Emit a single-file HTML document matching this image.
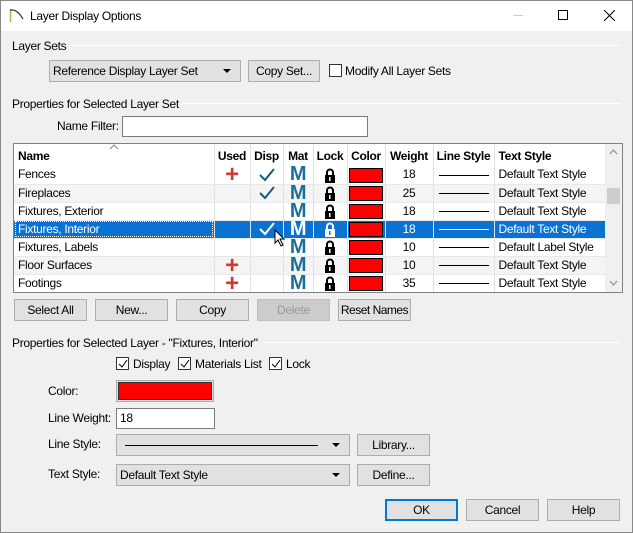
<!DOCTYPE html>
<html><head><style>
*{box-sizing:border-box;margin:0;padding:0}
body{width:633px;height:533px;overflow:hidden;background:#f0f0f0;font-family:"Liberation Sans",sans-serif;font-size:12px;letter-spacing:-0.3px;color:#000;position:relative}
.a{position:absolute}
.win{left:0;top:0;width:633px;height:533px;border:1px solid #888}
.title{left:1px;top:1px;width:631px;height:30px;background:#fff}
.lbl{position:absolute;white-space:nowrap;line-height:14px;background:#f0f0f0;padding-right:4px}
.hr{position:absolute;height:1px;background:#c8c8c8;border-bottom:1px solid #fff}
.btn{position:absolute;height:22px;background:#e1e1e1;border:1px solid #adadad;text-align:center;line-height:20px;white-space:nowrap}
.dd{position:absolute;height:22px;background:#e1e1e1;border:1px solid #adadad;line-height:20px;padding-left:3px;white-space:nowrap}
.dd:after{content:"";position:absolute;right:9px;top:8px;border-left:4px solid transparent;border-right:4px solid transparent;border-top:4px solid #000}
.inp{position:absolute;background:#fff;border:1px solid #7a7a7a;line-height:18px;padding-left:3px}
.cb{position:absolute;width:13px;height:13px;border:1px solid #333;background:#fff}
.cb svg{position:absolute;left:1px;top:1px}
table{border-collapse:collapse;table-layout:fixed}
td{height:18px;padding:0 0 0 4px;border-right:1px solid #e0e0e0;border-bottom:1px solid #e8e8e8;white-space:nowrap;overflow:hidden;line-height:17px}
tr.h td{font-weight:bold;height:22px;border-bottom:none;padding-top:2px}
tr.alt td{background:#f4f4f4}
tr.sel td{background:#0a72d0;color:#fff}
.c{text-align:center;padding:0}
.sw{display:inline-block;width:34px;height:15px;background:#f00;border:1px solid #000;vertical-align:middle}
.ln{display:inline-block;width:50px;height:1px;background:#000;vertical-align:middle}
.sel .ln{background:#fff}
.M{color:#1b6f99;font-weight:bold;font-size:20px;line-height:17px}
.sel .M{color:#fff}
.plus{color:#d23a2b;font-weight:bold;font-size:24px;line-height:17px}
.chk svg{vertical-align:middle}
.lk svg{vertical-align:middle}
</style></head><body>
<div class="a win"></div>
<div class="a title"></div>
<svg class="a" style="left:9px;top:7px" width="16" height="16"><path d="M1.5 15 V3 Q8 2 14 12" stroke="#333" fill="none" stroke-width="1.2"/><path d="M1.5 15 V4" stroke="#9c3" stroke-width="1.2"/></svg>
<div class="lbl" style="left:30px;top:9px;background:#fff">Layer Display Options</div>
<div class="a" style="left:513px;top:15px;width:10px;height:1px;background:#ccc"></div>
<div class="a" style="left:558px;top:10px;width:10px;height:10px;border:1px solid #000"></div>
<svg class="a" style="left:604px;top:10px" width="11" height="11"><path d="M0 0L11 11M11 0L0 11" stroke="#000"/></svg>

<div class="hr" style="left:12px;top:45px;width:608px"></div>
<div class="lbl" style="left:12px;top:39px">Layer Sets</div>
<div class="dd" style="left:49px;top:60px;width:192px">Reference Display Layer Set</div>
<div class="btn" style="left:248px;top:60px;width:72px">Copy Set...</div>
<div class="cb" style="left:329px;top:64px"></div>
<div class="lbl" style="left:345px;top:64px">Modify All Layer Sets</div>

<div class="hr" style="left:12px;top:103px;width:608px"></div>
<div class="lbl" style="left:12px;top:97px">Properties for Selected Layer Set</div>
<div class="lbl" style="left:57px;top:119px">Name Filter:</div>
<div class="inp" style="left:122px;top:116px;width:246px;height:21px"></div>

<div class="a" style="left:13px;top:143px;width:610px;height:150px;border:1px solid #828282;background:#fff;overflow:hidden">
<svg class="a" style="left:95px;top:0" width="10" height="6"><path d="M1 5L5 1L9 5" stroke="#888" fill="none"/></svg>
<table style="width:591px">
<colgroup><col style="width:200px"><col style="width:36px"><col style="width:33px"><col style="width:30px"><col style="width:34px"><col style="width:38px"><col style="width:48px"><col style="width:61px"><col style="width:111px"></colgroup>
<tr class="h"><td>Name</td><td class="c">Used</td><td class="c">Disp</td><td class="c">Mat</td><td class="c">Lock</td><td class="c">Color</td><td class="c">Weight</td><td class="c">Line Style</td><td>Text Style</td></tr>
<tr><td>Fences</td><td class="c plus">+</td><td class="c chk"><svg width="16" height="14"><path d="M1 7L6 12L15 1" stroke="#1b5a80" stroke-width="2" fill="none"/></svg></td><td class="c M">M</td><td class="c lk"><svg width="12" height="15"><path d="M3 7V4.5a3 3 0 0 1 6 0V7" stroke="#000" stroke-width="2" fill="none"/><rect x="1" y="7" width="10" height="8" fill="#000"/><rect x="5" y="9" width="1.5" height="4" fill="#fff"/></svg></td><td class="c"><span class="sw"></span></td><td class="c">18</td><td class="c"><span class="ln"></span></td><td>Default Text Style</td></tr>
<tr class="alt"><td>Fireplaces</td><td class="c"></td><td class="c chk"><svg width="16" height="14"><path d="M1 7L6 12L15 1" stroke="#1b5a80" stroke-width="2" fill="none"/></svg></td><td class="c M">M</td><td class="c lk"><svg width="12" height="15"><path d="M3 7V4.5a3 3 0 0 1 6 0V7" stroke="#000" stroke-width="2" fill="none"/><rect x="1" y="7" width="10" height="8" fill="#000"/><rect x="5" y="9" width="1.5" height="4" fill="#fff"/></svg></td><td class="c"><span class="sw"></span></td><td class="c">25</td><td class="c"><span class="ln"></span></td><td>Default Text Style</td></tr>
<tr><td>Fixtures, Exterior</td><td class="c"></td><td class="c"></td><td class="c M">M</td><td class="c lk"><svg width="12" height="15"><path d="M3 7V4.5a3 3 0 0 1 6 0V7" stroke="#000" stroke-width="2" fill="none"/><rect x="1" y="7" width="10" height="8" fill="#000"/><rect x="5" y="9" width="1.5" height="4" fill="#fff"/></svg></td><td class="c"><span class="sw"></span></td><td class="c">18</td><td class="c"><span class="ln"></span></td><td>Default Text Style</td></tr>
<tr class="sel"><td style="outline:1px dotted #fff;outline-offset:-2px">Fixtures, Interior</td><td class="c"></td><td class="c chk"><svg width="16" height="14"><path d="M1 7L6 12L15 1" stroke="#fff" stroke-width="2" fill="none"/></svg></td><td class="c M">M</td><td class="c lk"><svg width="12" height="15"><path d="M3 7V4.5a3 3 0 0 1 6 0V7" stroke="#fff" stroke-width="2" fill="none"/><rect x="1" y="7" width="10" height="8" fill="#fff"/><rect x="5" y="9" width="1.5" height="4" fill="#0a72d0"/></svg></td><td class="c"><span class="sw"></span></td><td class="c">18</td><td class="c"><span class="ln"></span></td><td>Default Text Style</td></tr>
<tr><td>Fixtures, Labels</td><td class="c"></td><td class="c"></td><td class="c M">M</td><td class="c lk"><svg width="12" height="15"><path d="M3 7V4.5a3 3 0 0 1 6 0V7" stroke="#000" stroke-width="2" fill="none"/><rect x="1" y="7" width="10" height="8" fill="#000"/><rect x="5" y="9" width="1.5" height="4" fill="#fff"/></svg></td><td class="c"><span class="sw"></span></td><td class="c">10</td><td class="c"><span class="ln"></span></td><td>Default Label Style</td></tr>
<tr class="alt"><td>Floor Surfaces</td><td class="c plus">+</td><td class="c"></td><td class="c M">M</td><td class="c lk"><svg width="12" height="15"><path d="M3 7V4.5a3 3 0 0 1 6 0V7" stroke="#000" stroke-width="2" fill="none"/><rect x="1" y="7" width="10" height="8" fill="#000"/><rect x="5" y="9" width="1.5" height="4" fill="#fff"/></svg></td><td class="c"><span class="sw"></span></td><td class="c">10</td><td class="c"><span class="ln"></span></td><td>Default Text Style</td></tr>
<tr><td>Footings</td><td class="c plus">+</td><td class="c"></td><td class="c M">M</td><td class="c lk"><svg width="12" height="15"><path d="M3 7V4.5a3 3 0 0 1 6 0V7" stroke="#000" stroke-width="2" fill="none"/><rect x="1" y="7" width="10" height="8" fill="#000"/><rect x="5" y="9" width="1.5" height="4" fill="#fff"/></svg></td><td class="c"><span class="sw"></span></td><td class="c">35</td><td class="c"><span class="ln"></span></td><td>Default Text Style</td></tr>
</table>
<div class="a" style="left:591px;top:0;width:17px;height:148px;background:#f0f0f0"></div>
<div class="a" style="left:593px;top:44px;width:13px;height:16px;background:#cdcdcd"></div>
<svg class="a" style="left:595px;top:5px" width="9" height="6"><path d="M1 5L4.5 1L8 5" stroke="#888" fill="none"/></svg>
<svg class="a" style="left:595px;top:136px" width="9" height="6"><path d="M1 1L4.5 5L8 1" stroke="#888" fill="none"/></svg>
</div>
<svg class="a" style="left:274px;top:229px" width="12" height="18"><path d="M1 1V14L4 11L7 17L9 16L6 10H10Z" fill="#fff" stroke="#000"/></svg>

<div class="btn" style="left:14px;top:299px;width:73px">Select All</div>
<div class="btn" style="left:95px;top:299px;width:73px">New...</div>
<div class="btn" style="left:176px;top:299px;width:73px">Copy</div>
<div class="btn" style="left:257px;top:299px;width:73px;color:#999;background:#ccc;border-color:#bfbfbf">Delete</div>
<div class="btn" style="left:338px;top:299px;width:73px;letter-spacing:-0.5px">Reset Names</div>

<div class="hr" style="left:12px;top:342px;width:608px"></div>
<div class="lbl" style="left:12px;top:336px">Properties for Selected Layer - "Fixtures, Interior"</div>
<div class="cb" style="left:116px;top:357px"><svg width="10" height="10"><path d="M1 5L4 8L9 1" stroke="#000" fill="none"/></svg></div>
<div class="lbl" style="left:133px;top:357px">Display</div>
<div class="cb" style="left:178px;top:357px"><svg width="10" height="10"><path d="M1 5L4 8L9 1" stroke="#000" fill="none"/></svg></div>
<div class="lbl" style="left:195px;top:357px">Materials List</div>
<div class="cb" style="left:269px;top:357px"><svg width="10" height="10"><path d="M1 5L4 8L9 1" stroke="#000" fill="none"/></svg></div>
<div class="lbl" style="left:286px;top:357px">Lock</div>

<div class="lbl" style="left:48px;top:384px">Color:</div>
<div class="a" style="left:116px;top:380px;width:98px;height:22px;background:#e1e1e1;border:1px solid #adadad;padding:1px"><div style="width:100%;height:100%;background:#f00;border:1px solid #333"></div></div>
<div class="lbl" style="left:48px;top:411px">Line Weight:</div>
<div class="inp" style="left:116px;top:408px;width:99px;height:21px">18</div>
<div class="lbl" style="left:48px;top:437px">Line Style:</div>
<div class="dd" style="left:116px;top:434px;width:234px"><div class="a" style="left:8px;top:10px;width:193px;height:1px;background:#000"></div></div>
<div class="btn" style="left:357px;top:434px;width:73px">Library...</div>
<div class="lbl" style="left:48px;top:467px">Text Style:</div>
<div class="dd" style="left:116px;top:464px;width:234px">Default Text Style</div>
<div class="btn" style="left:357px;top:464px;width:73px">Define...</div>

<div class="btn" style="left:385px;top:499px;width:73px;border:2px solid #0078d7;line-height:18px">OK</div>
<div class="btn" style="left:466px;top:499px;width:73px">Cancel</div>
<div class="btn" style="left:547px;top:499px;width:73px">Help</div>
</body></html>
